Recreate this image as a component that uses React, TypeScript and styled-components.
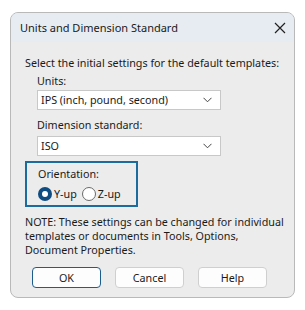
import React from "react";
import styled, { createGlobalStyle } from "styled-components";

const Global = createGlobalStyle`
  html, body { margin: 0; padding: 0; background: #ffffff; }
  body { font-family: "Noto Sans", "Open Sans", sans-serif; }
`;

const Page = styled.div`
  width: 305px;
  height: 310px;
  padding: 12px 0 0 10px;
  box-sizing: border-box;
`;

const Dialog = styled.div`
  width: 285px;
  height: 286px;
  box-sizing: border-box;
  border: 1px solid #b9b9b9;
  border-radius: 8px;
  background: #ececec;
  overflow: hidden;
  display: flex;
  flex-direction: column;
`;

const TitleBar = styled.div`
  height: 29px;
  flex: none;
  display: flex;
  align-items: center;
  justify-content: space-between;
  padding: 0 8px 0 9px;
  background: #e6ecf2;
  font-size: 11px;
  color: #1a1a1a;
`;

const Close = styled.svg`
  width: 12px;
  height: 12px;
`;

const Body = styled.div`
  padding: 14px 0 0 14px;
  display: flex;
  flex-direction: column;
  font-size: 10.75px;
  color: #1a1a1a;
  line-height: 14px;
`;

const Text = styled.div<{ $mt?: number }>`
  margin-top: ${(p) => p.$mt ?? 0}px;
  white-space: nowrap;
`;

const Indent = styled.div`
  padding-left: 12px;
  display: flex;
  flex-direction: column;
`;

const Select = styled.div<{ $mt?: number }>`
  margin-top: ${(p) => p.$mt ?? 0}px;
  width: 184px;
  height: 20px;
  box-sizing: border-box;
  border: 1px solid #c8c8c8;
  background: #ffffff;
  display: flex;
  align-items: center;
  justify-content: space-between;
  padding: 0 8px 0 3px;
`;

const Chevron = styled.svg`
  width: 9px;
  height: 6px;
`;

const Group = styled.div`
  margin-top: 5px;
  width: 113px;
  height: 46px;
  box-sizing: border-box;
  border: 2px solid #1b6b9e;
  padding: 4px 0 0 11px;
  display: flex;
  flex-direction: column;
`;

const RadioRow = styled.div`
  margin-top: 6px;
  display: flex;
  align-items: center;
`;

const Radio = styled.span<{ $on?: boolean }>`
  width: 14px;
  height: 14px;
  box-sizing: border-box;
  border-radius: 50%;
  background: ${(p) => (p.$on ? "#0f4c81" : "#ffffff")};
  border: ${(p) => (p.$on ? "none" : "1px solid #6a6a6a")};
  display: flex;
  align-items: center;
  justify-content: center;
  margin-right: 2px;
  &::after {
    content: "";
    display: ${(p) => (p.$on ? "block" : "none")};
    width: 6px;
    height: 6px;
    border-radius: 50%;
    background: #ffffff;
  }
`;

const RadioLabel = styled.span`
  margin-right: 5px;
`;

const Note = styled.div`
  margin-top: 8px;
  white-space: nowrap;
`;

const Buttons = styled.div`
  margin-top: 10px;
  padding-left: 7px;
  display: flex;
  gap: 14px;
`;

const Button = styled.div<{ $default?: boolean }>`
  width: 69px;
  height: 21px;
  box-sizing: border-box;
  border-radius: 4px;
  background: #fdfdfd;
  border: ${(p) => (p.$default ? "1px solid #1d5d8e" : "1px solid #cfcfcf")};
  display: flex;
  align-items: center;
  justify-content: center;
  font-size: 10.75px;
`;

export default function App() {
  return (
    <>
      <Global />
      <Page>
        <Dialog>
          <TitleBar>
            <span>Units and Dimension Standard</span>
            <Close viewBox="0 0 12 12">
              <path d="M1 1 L11 11 M11 1 L1 11" stroke="#222" strokeWidth="1.2" fill="none" />
            </Close>
          </TitleBar>
          <Body>
            <Text>Select the initial settings for the default templates:</Text>
            <Indent>
              <Text $mt={4}>Units:</Text>
              <Select $mt={2}>
                <span>IPS (inch, pound, second)</span>
                <Chevron viewBox="0 0 9 6">
                  <path d="M0.5 0.8 L4.5 4.8 L8.5 0.8" stroke="#444" strokeWidth="1" fill="none" />
                </Chevron>
              </Select>
              <Text $mt={8}>Dimension standard:</Text>
              <Select $mt={4}>
                <span>ISO</span>
                <Chevron viewBox="0 0 9 6">
                  <path d="M0.5 0.8 L4.5 4.8 L8.5 0.8" stroke="#444" strokeWidth="1" fill="none" />
                </Chevron>
              </Select>
            </Indent>
            <Group>
              <Text>Orientation:</Text>
              <RadioRow>
                <Radio $on />
                <RadioLabel>Y-up</RadioLabel>
                <Radio />
                <RadioLabel>Z-up</RadioLabel>
              </RadioRow>
            </Group>
            <Note>
              NOTE: These settings can be changed for individual
              <br />
              templates or documents in Tools, Options,
              <br />
              Document Properties.
            </Note>
            <Buttons>
              <Button $default>OK</Button>
              <Button>Cancel</Button>
              <Button>Help</Button>
            </Buttons>
          </Body>
        </Dialog>
      </Page>
    </>
  );
}
